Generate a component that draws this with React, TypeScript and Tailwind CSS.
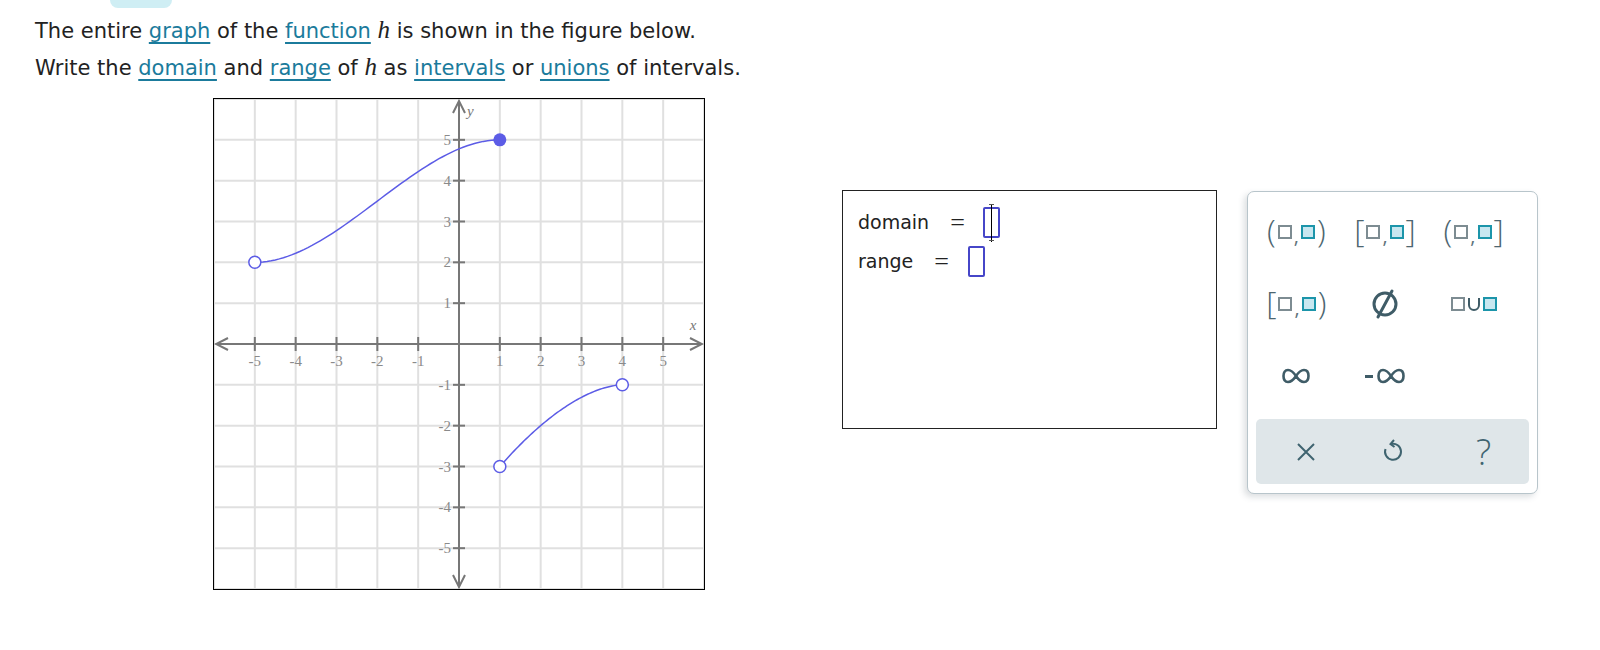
import React from "react";

const U = 490 / 12;
const px = (x: number) => 245 + x * U;
const py = (y: number) => 245 - y * U;

// sample a function into an svg path
function plot(f: (x: number) => number, a: number, b: number, n = 60) {
  let d = "";
  for (let i = 0; i <= n; i++) {
    const x = a + ((b - a) * i) / n;
    d += `${i ? " L" : "M"}${px(x).toFixed(2)},${py(f(x)).toFixed(2)}`;
  }
  return d;
}

const f1 = (x: number) => {
  const t = (x + 5) / 6;
  return 2 + 3 * (3 * t * t - 2 * t * t * t);
};
const f2 = (x: number) => -1 - 2 * Math.pow((4 - x) / 3, 1.71);

function Graph() {
  const ints = [-5, -4, -3, -2, -1, 1, 2, 3, 4, 5];
  const blue = "#5c5ce6";
  return (
    <div className="border border-black w-[492px] h-[492px] bg-white">
      <svg width="490" height="490" viewBox="0 0 490 490">
        {[-6, -5, -4, -3, -2, -1, 0, 1, 2, 3, 4, 5, 6].map((i) => (
          <g key={i}>
            <line x1={px(i)} y1={0} x2={px(i)} y2={490} stroke="#e0e0e0" strokeWidth="2" />
            <line x1={0} y1={py(i)} x2={490} y2={py(i)} stroke="#e0e0e0" strokeWidth="2" />
          </g>
        ))}
        {/* axes */}
        <line x1={2} y1={py(0)} x2={488} y2={py(0)} stroke="#777" strokeWidth="2" />
        <line x1={px(0)} y1={2} x2={px(0)} y2={488} stroke="#777" strokeWidth="2" />
        <polyline points={`${14},${py(0) - 6} 2,${py(0)} ${14},${py(0) + 6}`} fill="none" stroke="#777" strokeWidth="2" />
        <polyline points={`${476},${py(0) - 6} 488,${py(0)} ${476},${py(0) + 6}`} fill="none" stroke="#777" strokeWidth="2" />
        <polyline points={`${px(0) - 6},14 ${px(0)},2 ${px(0) + 6},14`} fill="none" stroke="#777" strokeWidth="2" />
        <polyline points={`${px(0) - 6},476 ${px(0)},488 ${px(0) + 6},476`} fill="none" stroke="#777" strokeWidth="2" />
        {ints.map((i) => (
          <g key={i}>
            <line x1={px(i)} y1={py(0) - 7} x2={px(i)} y2={py(0) + 7} stroke="#777" strokeWidth="2" />
            <line x1={px(0) - 6} y1={py(i)} x2={px(0) + 6} y2={py(i)} stroke="#777" strokeWidth="2" />
            <text x={px(i)} y={py(0) + 22} textAnchor="middle" fontFamily="'Liberation Serif', serif" fontSize="15" fill="#8a8a8a">
              {i < 0 ? `-${-i}` : i}
            </text>
            <text x={px(0) - 8} y={py(i) + 5} textAnchor="end" fontFamily="'Liberation Serif', serif" fontSize="15" fill="#8a8a8a">
              {i < 0 ? `-${-i}` : i}
            </text>
          </g>
        ))}
        <text x={px(5.65)} y={py(0) - 14} fontFamily="'Liberation Serif', serif" fontStyle="italic" fontSize="15" fill="#777">x</text>
        <text x={px(0) + 8} y={17} fontFamily="'Liberation Serif', serif" fontStyle="italic" fontSize="15" fill="#777">y</text>
        {/* curves */}
        <path d={plot(f1, -5, 1)} fill="none" stroke={blue} strokeWidth="1.5" />
        <path d={plot(f2, 1, 4)} fill="none" stroke={blue} strokeWidth="1.5" />
        <circle cx={px(-5)} cy={py(2)} r="6" fill="white" stroke={blue} strokeWidth="1.5" />
        <circle cx={px(1)} cy={py(5)} r="6.5" fill={blue} />
        <circle cx={px(1)} cy={py(-3)} r="6" fill="white" stroke={blue} strokeWidth="1.5" />
        <circle cx={px(4)} cy={py(-1)} r="6" fill="white" stroke={blue} strokeWidth="1.5" />
      </svg>
    </div>
  );
}

function Sq({ filled }: { filled?: boolean }) {
  return filled ? (
    <span className="inline-block w-[14px] h-[14px] border-[2.5px] border-[#1c95aa] bg-[#c8e7f0]" />
  ) : (
    <span className="inline-block w-[14px] h-[14px] border-[2.5px] border-[#7d8c92]" />
  );
}

function Interval({ l, r }: { l: string; r: string }) {
  return (
    <span className="inline-flex items-center text-[#4d6670] font-['Open_Sans'] font-light text-[32px] leading-none">
      <span className="-mt-[5px]">{l}</span>
      <span className="mx-[2px] flex items-center">
        <Sq />
        <span className="text-[20px] text-[#5f747c] font-normal mt-[8px] mx-[2px]">,</span>
        <Sq filled />
      </span>
      <span className="-mt-[5px]">{r}</span>
    </span>
  );
}

function Inf() {
  return (
    <svg width="28" height="16" viewBox="0 0 28 16">
      <path
        d="M14 8 C11 3.5 8.5 2 6 2 C3 2 1.5 4.7 1.5 8 C1.5 11.3 3 14 6 14 C8.5 14 11 12.5 14 8 C17 3.5 19.5 2 22 2 C25 2 26.5 4.7 26.5 8 C26.5 11.3 25 14 22 14 C19.5 14 17 12.5 14 8 Z"
        fill="none"
        stroke="#3f5c67"
        strokeWidth="2.6"
      />
    </svg>
  );
}

function Keypad() {
  const cell = "h-[72px] flex items-center justify-center";
  return (
    <div className="w-[291px] h-[303px] border border-[#b8c5cb] rounded-[7px] bg-white shadow-[-3px_3px_6px_rgba(60,80,90,0.18)] flex flex-col">
      <div className="grid grid-cols-3 w-[266px] ml-[4px] mt-[4px]">
        <div className={cell}><Interval l="(" r=")" /></div>
        <div className={cell}><Interval l="[" r="]" /></div>
        <div className={cell}><Interval l="(" r="]" /></div>
        <div className={cell}><Interval l="[" r=")" /></div>
        <div className={cell}>
          <svg width="30" height="32" viewBox="0 0 30 32">
            <ellipse cx="15" cy="16" rx="11" ry="11" fill="none" stroke="#3f5c67" strokeWidth="3" />
            <line x1="22" y1="3" x2="8" y2="29" stroke="#3f5c67" strokeWidth="3" strokeLinecap="round" />
          </svg>
        </div>
        <div className={cell}>
          <span className="inline-flex items-center gap-[2px]">
            <Sq />
            <svg width="14" height="15" viewBox="0 0 14 15">
              <path d="M2 1 V8 A5 5 0 0 0 12 8 V1" fill="none" stroke="#3f5c67" strokeWidth="2" />
            </svg>
            <Sq filled />
          </span>
        </div>
        <div className={cell}><Inf /></div>
        <div className={cell}>
          <span className="inline-flex items-center gap-[4px]">
            <span className="inline-block w-[8px] h-[3px] bg-[#3f5c67]" />
            <Inf />
          </span>
        </div>
        <div className={cell} />
      </div>
      <div className="mt-[7px] ml-[8px] w-[273px] h-[65px] rounded-[5px] bg-[#dfe6e9] grid grid-cols-3 items-center">
        <div className="flex justify-center pl-[8px]">
          <svg width="20" height="20" viewBox="0 0 20 20">
            <path d="M2 2 L18 18 M18 2 L2 18" stroke="#3f6470" strokeWidth="2" />
          </svg>
        </div>
        <div className="flex justify-center">
          <svg width="22" height="26" viewBox="0 0 22 26">
            <path d="M9 5 A8 8 0 1 1 3.5 10" fill="none" stroke="#3f6470" strokeWidth="2" />
            <path d="M12 1 L8.5 5 L12.5 8" fill="none" stroke="#3f6470" strokeWidth="2" />
          </svg>
        </div>
        <div className="flex justify-center">
          <span className="font-['Open_Sans'] font-light text-[36px] leading-none text-[#3f6470]">?</span>
        </div>
      </div>
    </div>
  );
}

function Blank({ cursor }: { cursor?: boolean }) {
  return (
    <span className="relative inline-block w-[17px] h-[31px] border-2 border-[#4646c8] rounded-[2px]">
      {cursor && (
        <>
          <span className="absolute left-[6px] -top-[4px] w-[1px] h-[37px] bg-black" />
          <span className="absolute left-[4px] -top-[5px] w-[5px] h-[1px] bg-[#555]" />
          <span className="absolute left-[4px] -bottom-[5px] w-[5px] h-[1px] bg-[#555]" />
        </>
      )}
    </span>
  );
}

function Link({ children }: { children: React.ReactNode }) {
  return <span className="text-[#1b7b9c] underline underline-offset-[4px] decoration-[1.5px]">{children}</span>;
}

function H() {
  return <span className="font-['Liberation_Serif'] italic text-[25px]">h</span>;
}

export default function App() {
  return (
    <div className="min-h-[650px] w-[1600px] bg-white font-['DejaVu_Sans'] text-[#222]">
      <div className="ml-[110px] w-[62px] h-[8px] rounded-b-[10px] bg-[#cfeef4]" />
      <div className="pl-[35px] pt-[4px] text-[21px] leading-[35px]">
        <div>
          The entire <Link>graph</Link> of the <Link>function</Link> <H /> is shown in the figure below.
        </div>
        <div>
          Write the <Link>domain</Link> and <Link>range</Link> of <H /> as <Link>intervals</Link> or{" "}
          <Link>unions</Link> of intervals.
        </div>
      </div>
      <div className="flex items-start mt-[12px]">
        <div className="ml-[213px]">
          <Graph />
        </div>
        <div className="ml-[137px] mt-[92px] w-[375px] h-[239px] border border-[#222] pl-[15px] pt-[15px] text-[19px] text-[#222]">
          <div className="flex items-center h-[33px]">
            <span>domain</span>
            <span className="ml-[21px] font-['Liberation_Serif'] text-[26px] leading-none">=</span>
            <span className="ml-[18px] flex"><Blank cursor /></span>
          </div>
          <div className="flex items-center h-[33px] mt-[6px]">
            <span>range</span>
            <span className="ml-[21px] font-['Liberation_Serif'] text-[26px] leading-none">=</span>
            <span className="ml-[19px] flex"><Blank /></span>
          </div>
        </div>
        <div className="ml-[30px] mt-[93px]">
          <Keypad />
        </div>
      </div>
    </div>
  );
}
